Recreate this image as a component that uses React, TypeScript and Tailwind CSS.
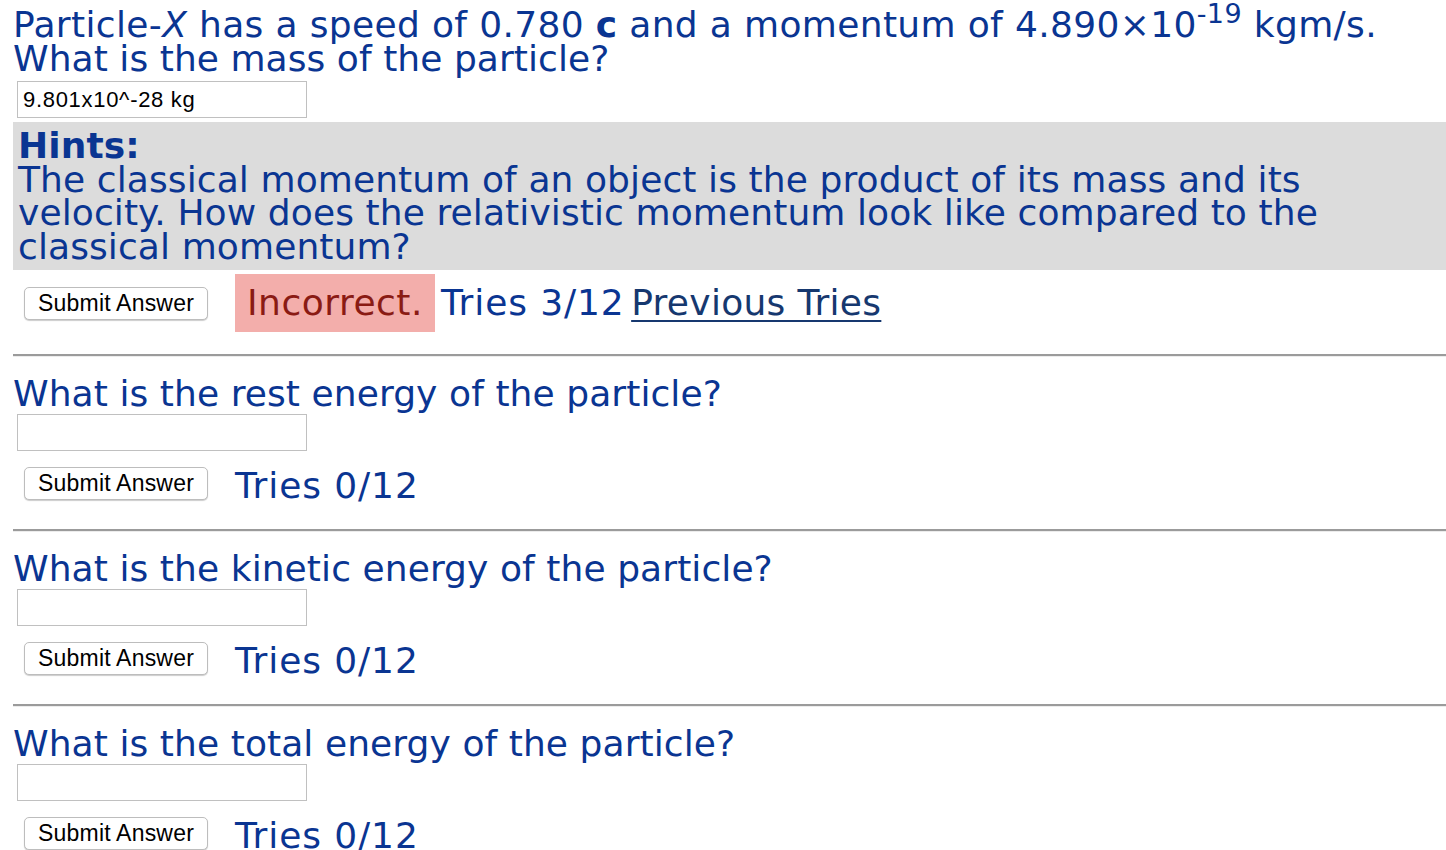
import React from "react";

function Hr() {
  return <div className="border-t-2 border-t-[#9b9b9b] border-b border-b-[#ececec]" />;
}

function SubmitButton() {
  return (
    <button
      type="button"
      className="ml-[11px] h-[33px] w-[184px] shrink-0 rounded-[5px] border border-[#bdbdbd] bg-white text-[23px] leading-none tracking-[0.2px] text-black shadow-[0_1px_1px_rgba(0,0,0,0.2)] font-['Liberation_Sans',Arial,sans-serif]"
    >
      Submit Answer
    </button>
  );
}

function AnswerInput({ value }: { value?: string }) {
  return (
    <input
      type="text"
      defaultValue={value}
      className="ml-[4px] block h-[37px] w-[290px] border border-[#c0c0c0] bg-white pl-[5px] text-[22px] tracking-[0.7px] text-black outline-none font-['Liberation_Sans',Arial,sans-serif]"
    />
  );
}

function Section({ q }: { q: string }) {
  return (
    <div>
      <Hr />
      <div className="pt-[20px] pb-[26px]">
        <div className="text-[36px] leading-[34px] tracking-[0.08px]">{q}</div>
        <div className="mt-[3px]">
          <AnswerInput />
        </div>
        <div className="mt-[16px] flex items-start">
          <SubmitButton />
          <span className="ml-[27px] mt-[2px] text-[36px] leading-[34px] tracking-[0.9px]">Tries 0/12</span>
        </div>
      </div>
    </div>
  );
}

export default function App() {
  return (
    <div className="h-[850px] w-full overflow-hidden bg-white pl-[13px] pt-[8px] text-[#0a3592] font-['DejaVu_Sans',Verdana,sans-serif]">
      <div className="text-[36px] leading-[34px]">
        <div className="tracking-[0.35px]">
          Particle-<i>X</i> has a speed of 0.780 <b>c</b> and a momentum of 4.890×10
          <span className="align-[14px] text-[27px] leading-[0]">-19</span> kgm/s.
        </div>
        <div className="tracking-[0.06px]">What is the mass of the particle?</div>
      </div>
      <div className="mt-[5px]">
        <AnswerInput value="9.801x10^-28 kg" />
      </div>
      <div className="mt-[4px] bg-[#dcdcdc] px-[5px] pt-[7px] pb-[7px] text-[36px] leading-[33.5px] tracking-[0.1px]">
        <div className="font-bold">Hints:</div>
        <div>
          The classical momentum of an object is the product of its mass and its velocity. How does the
          relativistic momentum look like compared to the classical momentum?
        </div>
      </div>
      <div className="mt-[4px] mb-[22px] flex items-center">
        <SubmitButton />
        <span className="ml-[27px] bg-[#f3aeab] px-[12px] py-[12px] text-[36px] leading-[34px] tracking-[0.5px] text-[#8a1b14]">
          Incorrect.
        </span>
        <span className="ml-[6px] text-[36px] leading-[34px]">
          <span className="tracking-[0.9px]">Tries 3/12</span>
          <a href="#" className="ml-[6.5px] tracking-[0.3px] text-[#16386f] underline decoration-2 underline-offset-[5px]">
            Previous Tries
          </a>
        </span>
      </div>
      <Section q="What is the rest energy of the particle?" />
      <Section q="What is the kinetic energy of the particle?" />
      <Section q="What is the total energy of the particle?" />
    </div>
  );
}
